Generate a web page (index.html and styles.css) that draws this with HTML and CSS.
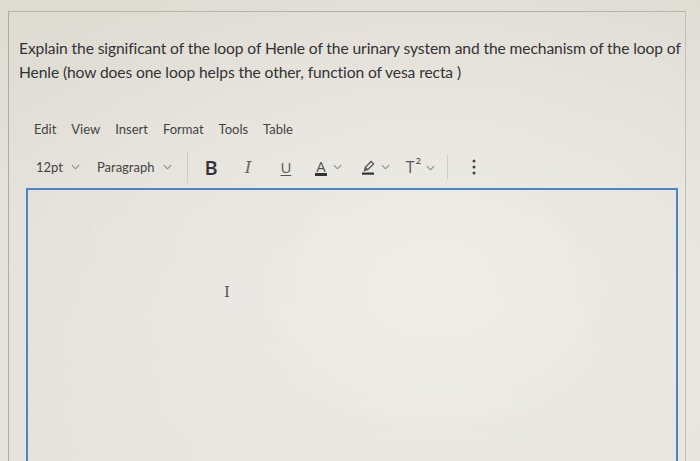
FILE: index.html
```html
<!DOCTYPE html>
<html>
<head>
<meta charset="utf-8">
<link rel="stylesheet" href="styles.css">
</head>
<body>
<div class="frame">
  <p class="question">Explain the significant of the loop of Henle of the urinary system and the mechanism of the loop of Henle (how does one loop helps the other, function of vesa recta )</p>
  <nav class="menubar">
    <span class="menu">Edit</span>
    <span class="menu">View</span>
    <span class="menu">Insert</span>
    <span class="menu">Format</span>
    <span class="menu">Tools</span>
    <span class="menu">Table</span>
  </nav>
  <div class="toolbar">
    <span class="select size">12pt <svg class="chev" viewBox="0 0 10 6"><path d="M1 1l4 4 4-4"/></svg></span>
    <span class="select para">Paragraph <svg class="chev" viewBox="0 0 10 6"><path d="M1 1l4 4 4-4"/></svg></span>
    <span class="sep"></span>
    <span class="btn bold">B</span>
    <span class="btn ital">I</span>
    <span class="btn under">U</span>
    <span class="btn color"><span class="aglyph">A</span><svg class="chev" viewBox="0 0 10 6"><path d="M1 1l4 4 4-4"/></svg></span>
    <span class="btn hl"><svg class="pen" viewBox="0 0 14 15"><path d="M3.5 10.5l0.8-3.2 5.8-5.8 2.4 2.4-5.8 5.8z M4.3 7.3l2.4 2.4"/><rect x="1" y="12.5" width="12" height="2.2" class="fill"/></svg><svg class="chev" viewBox="0 0 10 6"><path d="M1 1l4 4 4-4"/></svg></span>
    <span class="btn sup"><span class="t">T</span><span class="two">2</span><svg class="chev" viewBox="0 0 10 6"><path d="M1 1l4 4 4-4"/></svg></span>
    <span class="sep sep2"></span>
    <svg class="more" viewBox="0 0 4 16"><circle cx="2" cy="2" r="1.5"/><circle cx="2" cy="8" r="1.5"/><circle cx="2" cy="14" r="1.5"/></svg>
  </div>
  <div class="editor">
    <span class="ibeam">I</span>
  </div>
</div>
</body>
</html>
```

FILE: styles.css
```css
html, body {
  margin: 0;
  height: 100%;
  overflow: hidden;
}
body {
  background:
    radial-gradient(ellipse 70% 80% at 62% 62%, rgba(240,238,233,0.9) 0%, rgba(240,238,233,0) 100%),
    linear-gradient(180deg, #dedbd3 0%, #e3e0d9 40%, #e6e3dc 100%);
  font-family: Lato, "Open Sans", sans-serif;
  color: #3b3b3b;
}
.frame {
  margin: 11px 14px 0 8px;
  border-top: 1px solid #b5b2ab;
  border-left: 1px solid #aeaba4;
  border-right: 1px solid #c3c0b9;
  height: 450px;
  box-sizing: border-box;
  overflow: hidden;
}
.question {
  margin: 0;
  padding: 24px 0 0 10px;
  font-size: 15.6px;
  line-height: 24px;
  letter-spacing: -0.1px;
  color: #333;
}
.menubar {
  display: flex;
  gap: 15px;
  padding: 36px 0 0 25px;
  font-size: 13px;
  line-height: 18px;
  color: #444;
}
.menubar .menu { display: block; }
.toolbar {
  display: flex;
  align-items: center;
  height: 30px;
  margin-top: 14px;
  padding-left: 27px;
  font-size: 13px;
  color: #444;
}
.chev {
  width: 9px;
  height: 6px;
  fill: none;
  stroke: #888;
  stroke-width: 1.2;
  margin-left: 8px;
}
.select { display: flex; align-items: center; }
.size { margin-right: 17px; }
.para { margin-right: 15px; }
.sep {
  width: 1px;
  height: 32px;
  background: #cfccc5;
  margin-right: 17px;
}
.btn { display: flex; align-items: center; }
.bold {
  font-family: "Open Sans", Lato, sans-serif;
  font-weight: 600;
  font-size: 20px;
  color: #333;
  margin-right: 27px;
}
.ital {
  font-family: "DejaVu Serif", serif;
  font-style: italic;
  font-size: 17px;
  color: #666;
  margin-right: 29px;
}
.under {
  font-family: "Open Sans", sans-serif;
  font-size: 15px;
  color: #555;
  text-decoration: underline;
  text-underline-offset: 2px;
  margin-right: 24px;
}
.aglyph {
  font-family: "Open Sans", sans-serif;
  font-size: 15px;
  color: #555;
  border-bottom: 3px solid #333;
  line-height: 14px;
  padding: 0 1px;
}
.color .chev { margin-left: 6px; }
.color { margin-right: 19px; }
.pen {
  width: 14px;
  height: 15px;
  fill: none;
  stroke: #555;
  stroke-width: 1.3;
}
.pen .fill { fill: #333; stroke: none; }
.hl .chev { margin-left: 6px; }
.hl { margin-right: 16px; }
.sup {
  font-family: "Open Sans", sans-serif;
  color: #555;
  align-items: flex-start;
}
.sup .t { font-size: 16px; line-height: 18px; }
.sup .two { font-size: 9px; line-height: 10px; margin-left: 1px; margin-top: -2px; font-weight: 600; }
.sup .chev { margin-left: 5px; margin-top: 7px; }
.sep2 { margin-left: 12px; margin-right: 24px; height: 24px; }
.more { width: 4px; height: 16px; fill: #444; }
.editor {
  position: relative;
  margin: 6px 0 0 17px;
  width: 652px;
  height: 300px;
  border: 2px solid #4a86c6;
  box-sizing: border-box;
}
.ibeam {
  position: absolute;
  left: 196px;
  top: 93px;
  font-family: "DejaVu Serif", serif;
  font-size: 15px;
  color: #555;
}
```
